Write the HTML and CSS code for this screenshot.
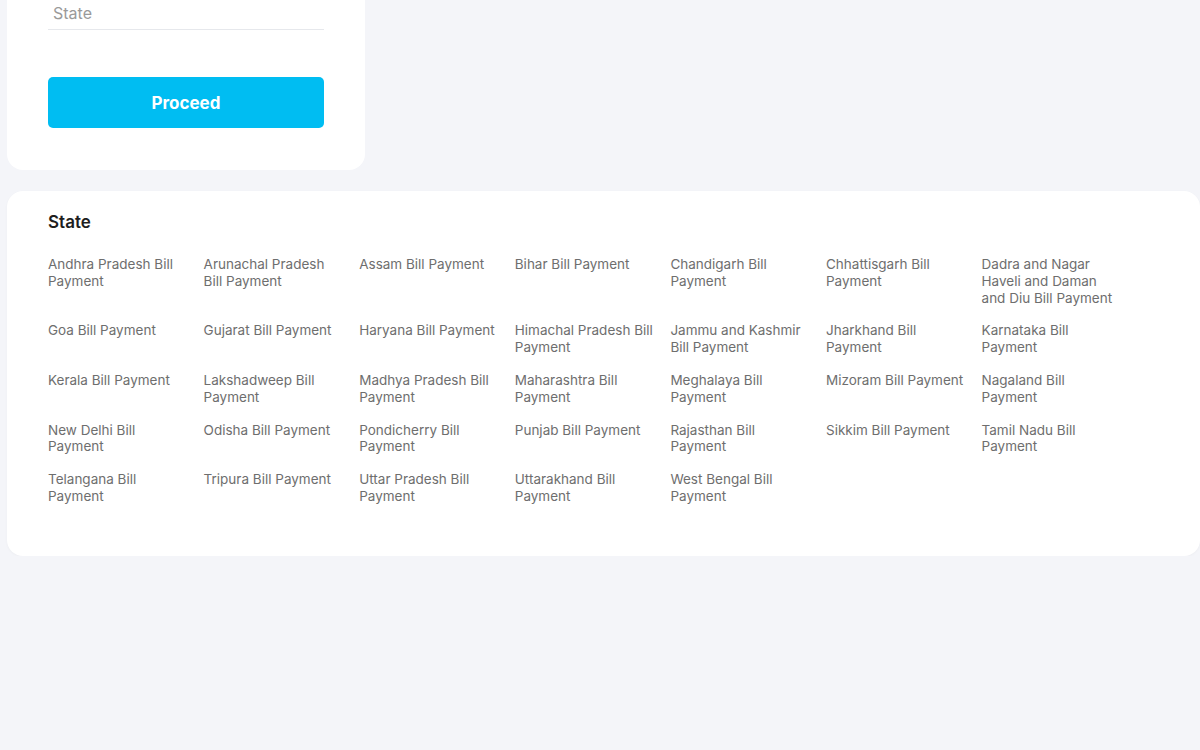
FILE: index.html
```html
<!DOCTYPE html>
<html lang="en">
<head>
    <meta charset="UTF-8">
    <title>Bill Payment</title>
    <link rel="stylesheet" href="styles.css">
</head>
<body>
    <div class="page">
        <div class="form-card">
            <input class="field" type="text" placeholder="State">
            <button class="proceed-button">Proceed</button>
        </div>

        <div class="state-card">
            <h3 class="state-title">State</h3>
            <ul class="state-list">
                <li>Andhra Pradesh Bill Payment</li>
                <li>Arunachal Pradesh Bill Payment</li>
                <li>Assam Bill Payment</li>
                <li>Bihar Bill Payment</li>
                <li>Chandigarh Bill Payment</li>
                <li>Chhattisgarh Bill Payment</li>
                <li>Dadra and Nagar Haveli and Daman and Diu Bill Payment</li>
                <li>Goa Bill Payment</li>
                <li>Gujarat Bill Payment</li>
                <li>Haryana Bill Payment</li>
                <li>Himachal Pradesh Bill Payment</li>
                <li>Jammu and Kashmir Bill Payment</li>
                <li>Jharkhand Bill Payment</li>
                <li>Karnataka Bill Payment</li>
                <li>Kerala Bill Payment</li>
                <li>Lakshadweep Bill Payment</li>
                <li>Madhya Pradesh Bill Payment</li>
                <li>Maharashtra Bill Payment</li>
                <li>Meghalaya Bill Payment</li>
                <li>Mizoram Bill Payment</li>
                <li>Nagaland Bill Payment</li>
                <li>New Delhi Bill Payment</li>
                <li>Odisha Bill Payment</li>
                <li>Pondicherry Bill Payment</li>
                <li>Punjab Bill Payment</li>
                <li>Rajasthan Bill Payment</li>
                <li>Sikkim Bill Payment</li>
                <li>Tamil Nadu Bill Payment</li>
                <li>Telangana Bill Payment</li>
                <li>Tripura Bill Payment</li>
                <li>Uttar Pradesh Bill Payment</li>
                <li>Uttarakhand Bill Payment</li>
                <li>West Bengal Bill Payment</li>
            </ul>
        </div>
    </div>
</body>
</html>
```

FILE: styles.css
```css
* {
    margin: 0;
    padding: 0;
    box-sizing: border-box;
}

body {
    background-color: #f4f5f9;
    font-family: Inter, "Noto Sans", Arial, sans-serif;
    color: #222;
    overflow: hidden;
}

.page {
    padding-left: 7px;
    display: flex;
    flex-direction: column;
    gap: 21px;
}

.form-card {
    width: 358px;
    margin-top: -39px;
    padding: 34px 41px 42px;
    background-color: #fff;
    border-radius: 16px;
    display: flex;
    flex-direction: column;
}

.field {
    height: 35px;
    border: none;
    border-bottom: 1px solid #e6e8ec;
    padding: 2px 5px 0;
    font-family: inherit;
    font-size: 16px;
    color: #333;
    outline: none;
}

.field::placeholder {
    color: #9a9a9a;
}

.proceed-button {
    margin-top: 47px;
    height: 51px;
    background-color: #00bdf2;
    color: #fff;
    border: none;
    border-radius: 5px;
    font-family: inherit;
    font-size: 17px;
    font-weight: 700;
    cursor: pointer;
}

.state-card {
    width: 1193px;
    padding: 21px 41px 51px;
    background-color: #fff;
    border-radius: 16px;
    box-shadow: 0 1px 3px rgba(0, 0, 0, 0.03);
}

.state-title {
    font-size: 17px;
    font-weight: 600;
    line-height: 20px;
    color: #1e1e1e;
}

.state-list {
    list-style: none;
    margin-top: 24px;
    display: grid;
    grid-template-columns: repeat(7, 155.6px);
    row-gap: 16px;
}

.state-list li {
    padding-right: 14px;
    font-size: 13.5px;
    line-height: 16.8px;
    color: #6e6e6e;
}
```
